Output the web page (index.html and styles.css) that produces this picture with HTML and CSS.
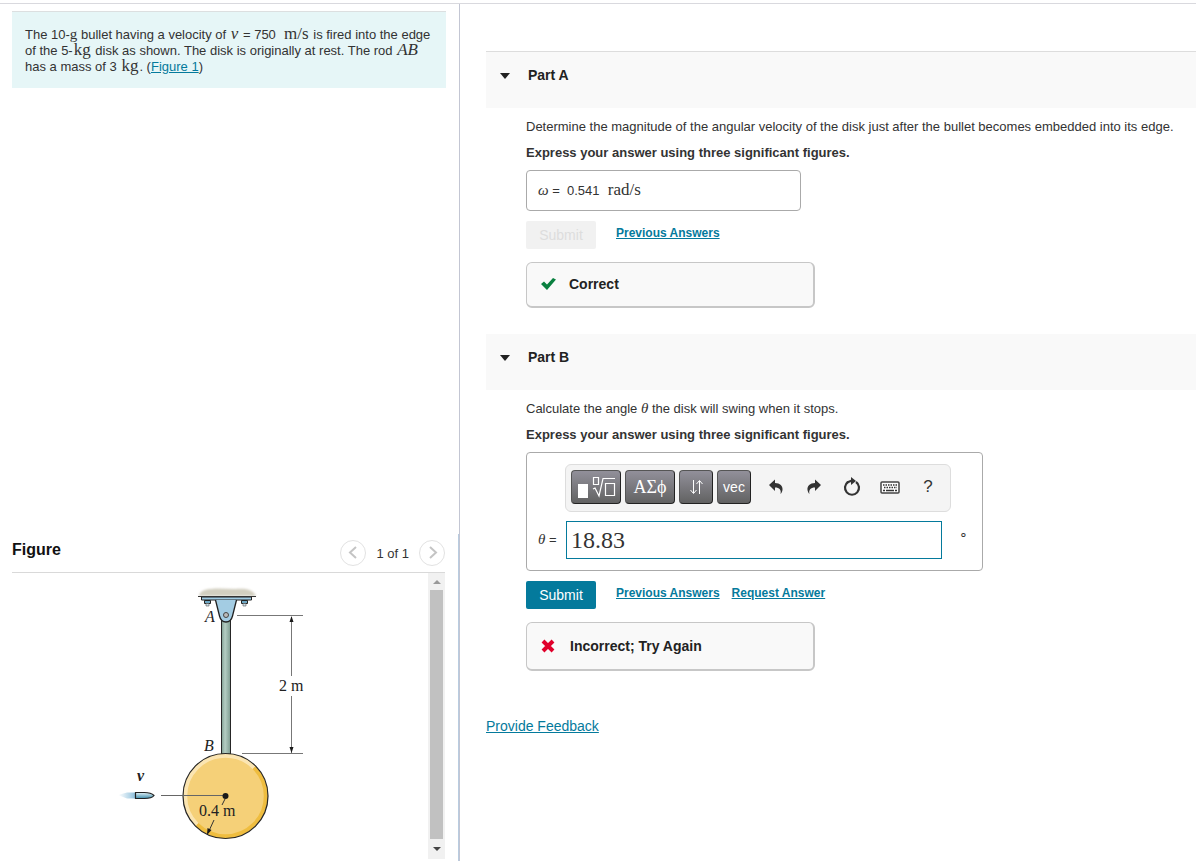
FILE: index.html
```
<!DOCTYPE html>
<html lang="en">

<head>
  <meta name="viewport" content="width=device-width, initial-scale=1.0">
  <meta charset="utf-8">
  <title>Angular velocity of the disk</title>
  <link rel="stylesheet" href="styles.css">
</head>

<body>
  <div class="page">
    <div class="side">
      <div class="problem">
        The 10-<span class="math small">g</span> bullet having a velocity of <i class="math">v</i> = 750 &nbsp;<span class="math">m/s</span> is fired into the edge of the 5-<span class="math">kg</span> disk as shown. The disk is originally at rest. The rod <i class="math">AB</i> has a mass of 3 <span class="math">kg</span>. (<a href="#figure">Figure 1</a>)
      </div>
      <div class="figure" id="figure">
        <div class="figure-head">
          <h2>Figure</h2>
          <div class="pager">
            <button type="button" aria-label="Previous figure"><svg width="24" height="24" viewBox="0 0 24 24"><path d="M15 6l-6 5.500 6 5.500" /></svg></button>
            <span>1 of 1</span>
            <button type="button" aria-label="Next figure"><svg width="24" height="24" viewBox="0 0 24 24"><path d="M10 6l6 5.500-6 5.500" /></svg></button>
          </div>
        </div>
        <div class="figure-view">
          <svg class="drawing" width="416" height="286" viewBox="0 0 416 286">
            <defs>
              <linearGradient id="rod" x1="0" x2="1" y1="0" y2="0">
                <stop offset="0" stop-color="#7f9e92" />
                <stop offset=".4" stop-color="#b4cdc3" />
                <stop offset="1" stop-color="#7d9c90" />
              </linearGradient>
              <linearGradient id="bullet" x1="0" x2="0" y1="0" y2="1">
                <stop offset="0" stop-color="#e4f3f8" />
                <stop offset="1" stop-color="#3e8cab" />
              </linearGradient>
              <linearGradient id="trail" x1="0" x2="1" y1="0" y2="0">
                <stop offset="0" stop-color="#9cc8e0" stop-opacity="0" />
                <stop offset="1" stop-color="#8fc0dc" />
              </linearGradient>
              <filter id="soft" x="-10%" y="-30%" width="120%" height="160%">
                <feGaussianBlur stdDeviation="1" />
              </filter>
            </defs>
            <!-- ceiling and bracket -->
            <path d="M187 23c1-5 6-7 12-7 8-1 16 0 24 0 9-1 18 0 21 7z" fill="#d2cfc0" filter="url(#soft)" />
            <path d="M192.500 27.500h6v3h-6zM229.500 27.500h6v3h-6z" fill="#6fa8c4" stroke="#222" />
            <path d="M194 30.500h3v2.500h-3zM231 30.500h3v2.500h-3z" fill="#cfe3ee" stroke="#555" stroke-width=".6" />
            <path d="M189.500 24h50v3h-50z" fill="#9fcbe3" stroke="#222" />
            <path d="M186 23.500h58" stroke="#333" />
            <rect x="209.500" y="46" width="9" height="135" fill="url(#rod)" stroke="#262626" />
            <path d="M203.500 27h21l-4 16c-1 4-3.500 6-6.500 6s-5.500-2-6.500-6z" fill="#a3cce3" />
            <path d="M203.500 27l4 16c1 4 3.500 6 6.500 6s5.500-2 6.500-6l4-16" fill="none" stroke="#222" stroke-width="1.300" />
            <circle cx="214" cy="42" r="2.500" fill="#bbb" stroke="#444" />
            <!-- disk -->
            <circle cx="213.500" cy="223" r="42.500" fill="#f5d078" />
            <path d="M185 251.500A40.300 40.300 0 0 0 242 194.500" fill="none" stroke="#efbd3f" stroke-width="4" />
            <path d="M185 251.500A40.300 40.300 0 0 1 242 194.500" fill="none" stroke="#fbe5b2" stroke-width="4" />
            <circle cx="213.500" cy="223" r="42.500" fill="none" stroke="#262626" stroke-width="1.200" />
            <path d="M149 222.500h64" stroke="#666" />
            <circle cx="213.500" cy="223" r="3" fill="#1a1a1a" />
            <path d="M213 226l-3 6M202 247l-6 13" stroke="#333" fill="none" />
            <path d="M195 262l.5-7 4 2z" fill="#1a1a1a" />
            <!-- dimension lines -->
            <path d="M225 42.500h66M230 180.500h61M279.500 44v59M279.500 123v57" stroke="#777" />
            <path d="M279.500 43l2 6h-4zM279.500 180l2-6h-4z" fill="#1a1a1a" />
            <!-- bullet -->
            <path d="M106 222l9-2.500h8v6h-8z" fill="url(#trail)" />
            <path d="M123.500 219.500h9c5 0 8 1.500 9.500 3-1.500 2-5 3-9.500 3h-9z" fill="url(#bullet)" stroke="#222" stroke-width="1.200" />
            <g class="labels">
              <text x="193" y="49" font-style="italic">A</text>
              <text x="192" y="178" font-style="italic">B</text>
              <text x="125" y="208" font-style="italic" font-weight="bold">v</text>
              <text x="267" y="118">2 m</text>
              <text x="187" y="243">0.4 m</text>
            </g>
          </svg>
          <div class="scroll">
            <button type="button" class="up" aria-label="Scroll up"></button>
            <div class="thumb"></div>
            <button type="button" class="down" aria-label="Scroll down"></button>
          </div>
        </div>
      </div>
    </div>

    <div class="main">
      <div class="part first">
        <h3>Part A</h3>
        <div class="part-body">
          <p>Determine the magnitude of the angular velocity of the disk just after the bullet becomes embedded into its edge.</p>
          <p class="hint">Express your answer using three significant figures.</p>
          <div class="answer"><i class="math small">ω</i> = &nbsp;0.541 &nbsp;<span class="math">rad/s</span></div>
          <div class="actions">
            <button type="button" class="submit" disabled>Submit</button>
            <a href="#">Previous Answers</a>
          </div>
          <div class="feedback">
            <svg width="15" height="14" viewBox="0 0 15 14"><path d="M0 7l3-2.500 3 3L12 1l3 1.500L6 13z" fill="#0a8040" /></svg>
            Correct
          </div>
        </div>
      </div>

      <div class="part">
        <h3>Part B</h3>
        <div class="part-body">
          <p>Calculate the angle <i class="math small">θ</i> the disk will swing when it stops.</p>
          <p class="hint">Express your answer using three significant figures.</p>
          <div class="editor">
            <div class="toolbar">
              <button type="button" class="key wide" aria-label="Templates">
                <svg width="40" height="24" viewBox="0 0 40 24">
                  <path d="M2 9h10v14H2z" fill="#fff" />
                  <path d="M17.500 2.500h5v7h-5zM17 14l2-1 4 8 4-17.500h12M29.500 8.500h9v12h-9z" fill="none" stroke="#fff" stroke-width="1.200" />
                </svg>
              </button>
              <button type="button" class="key wide greek">ΑΣϕ</button>
              <button type="button" class="key" aria-label="Subscripts and arrows">
                <svg width="14" height="18" viewBox="0 0 14 18"><path d="M4.500 2v13M1.500 12l3 3.500 3-3.500M10.500 16V3M7.500 6l3-3.500 3 3.500" fill="none" stroke="#fff" /></svg>
              </button>
              <button type="button" class="key">vec</button>
              <div class="tools">
                <button type="button" aria-label="Undo">
                  <svg width="14" height="16" viewBox="0 0 14 16"><path d="M0 6l6-5.500v3.500c5 0 8 3 7.500 7-.2 1.500-1 3-2 4 1-4-1-6.500-5.500-6.500V12z" /></svg>
                </button>
                <button type="button" aria-label="Redo">
                  <svg width="14" height="16" viewBox="0 0 14 16"><path d="M14 6L8 .5V4C3 4 0 7 .5 11c.2 1.500 1 3 2 4-1-4 1-6.500 5.500-6.500V12z" /></svg>
                </button>
                <button type="button" aria-label="Reset">
                  <svg width="18" height="20" viewBox="0 0 18 20"><path d="M13 5a7 7 0 1 1-8 0" fill="none" stroke="#333" stroke-width="2.200" /><path d="M8 0l5 4-5 4z" /><path d="M4 5.500l5-2" stroke="#333" stroke-width="2" /></svg>
                </button>
                <button type="button" aria-label="Keyboard shortcuts">
                  <svg width="20" height="14" viewBox="0 0 20 14">
                    <rect x="1" y="2" width="18" height="11" rx="1" fill="#fff" stroke="#444" stroke-width="1.500" />
                    <path d="M3 5h14M4 7.500h13" stroke="#333" stroke-width="1.500" stroke-dasharray="1.500 1" />
                    <path d="M3 10.500h2M6 10.500h8M15 10.500h2" stroke="#333" stroke-width="1.500" />
                  </svg>
                </button>
                <button type="button" aria-label="Help">?</button>
              </div>
            </div>
            <div class="entry">
              <label for="theta"><i class="math small">θ</i> =</label>
              <input type="text" id="theta" value="18.83">
              <span class="unit">∘</span>
            </div>
          </div>
          <div class="actions">
            <button type="button" class="submit">Submit</button>
            <a href="#">Previous Answers</a>
            <a href="#">Request Answer</a>
          </div>
          <div class="feedback wrong">
            <svg width="14" height="14" viewBox="0 0 14 14"><path d="M2 2l10 10M12 2L2 12" stroke="#e0002b" stroke-width="4" /></svg>
            Incorrect; Try Again
          </div>
        </div>
      </div>

      <a class="provide" href="#">Provide Feedback</a>
    </div>
  </div>
</body>

</html>
```
FILE: styles.css
```
* {
  box-sizing: border-box;
}

body, h2, h3, p {
  margin: 0;
}

body {
  padding-top: 3px;
  background: #fff;
  color: #333;
  font: 13px/16px "Liberation Sans", Arial, sans-serif;
}

a {
  color: #047a9c;
}

button {
  padding: 0;
  border: 0;
  font-family: inherit;
  cursor: pointer;
}

.math {
  margin: 0 1px;
  font-family: "Liberation Serif", "Times New Roman", serif;
  font-size: 17px;
  line-height: 12px;
}

.small {
  margin: 0;
  font-size: 15px;
}

.page {
  display: grid;
  grid-template-columns: 5fr 8fr;
  min-height: calc(100vh - 3px);
  border-top: 1px solid #d9d9de;
}

/* left column */

.side {
  display: flex;
  flex-direction: column;
  justify-content: space-between;
  border-right: 1px solid #c3c6d3;
}

.problem {
  margin: 7px 13px 0 12px;
  padding: 15px 12px 13px 13px;
  border-top: 1px solid #dcdfe0;
  background: #e6f6f7;
}

.figure {
  padding: 6px 13px 2px 12px;
  border-right: 1px solid #b9cce0;
}

.figure-head {
  display: flex;
  justify-content: space-between;
  height: 33px;
  border-bottom: 1px solid #d9d9d9;
}

.figure-head h2 {
  padding-top: 1px;
  color: #111;
  font-size: 16px;
  line-height: 18px;
}

.pager {
  display: flex;
  gap: 10px;
  line-height: 28px;
}

.pager button {
  width: 26px;
  height: 26px;
  border: 1px solid #e2e2e2;
  border-radius: 50%;
  background: #fff;
}

.pager svg {
  display: block;
  fill: none;
  stroke: #c4c4c4;
  stroke-width: 2;
}

.figure-view {
  display: flex;
  justify-content: space-between;
}

.drawing {
  flex: 0 1 auto;
  min-width: 0;
}

.labels {
  fill: #222;
  font-family: "Liberation Serif", "Times New Roman", serif;
  font-size: 16px;
}

.scroll {
  display: flex;
  flex: 0 0 17px;
  flex-direction: column;
  align-items: center;
  background: #f1f1f1;
}

.scroll button {
  width: 17px;
  height: 17px;
  background: none;
}

.scroll button::before {
  display: block;
  width: 0;
  margin: 0 auto;
  border: 4px solid transparent;
  content: "";
}

.scroll .up::before {
  border-top: 0;
  border-bottom-color: #999;
}

.scroll .down {
  height: 20px;
}

.scroll .down::before {
  border-bottom: 0;
  border-top-color: #444;
}

.thumb {
  flex: 1;
  width: 13px;
  background: #c1c1c1;
}

/* right column */

.main {
  padding: 47px 0 30px 26px;
}

.part {
  margin-bottom: 26px;
}

.part h3 {
  display: flex;
  align-items: center;
  gap: 18px;
  padding: 15px 14px 24px;
  background: #f9f9f9;
  color: #222;
  font-size: 14px;
  line-height: 17px;
}

.first h3 {
  border-top: 1px solid #ddd;
}

.part h3::before {
  border: 5px solid transparent;
  border-top: 6px solid #222;
  border-bottom: 0;
  content: "";
}

.part-body {
  padding: 11px 0 0 40px;
}

.part-body p {
  margin-bottom: 10px;
}

.part-body .hint {
  margin-bottom: 9px;
  font-weight: bold;
}

.answer {
  width: 275px;
  padding: 12px 11px 11px;
  border: 1px solid #aaa;
  border-radius: 4px;
}

.actions {
  display: flex;
  gap: 12px;
  margin: 10px 0 13px;
  font-size: 12px;
  font-weight: bold;
  line-height: 25px;
}

.submit {
  width: 70px;
  height: 28px;
  margin-right: 8px;
  border-radius: 2px;
  background: #047a9c;
  color: #fff;
  font-size: 14px;
}

.submit:disabled {
  background: #f1f1f1;
  color: #ddd;
}

.feedback {
  display: flex;
  align-items: center;
  gap: 13px;
  width: 289px;
  height: 46px;
  padding: 0 14px 1px;
  border: 1px solid #c7c7c7;
  border-right-width: 2px;
  border-bottom-width: 2px;
  border-radius: 6px;
  background: #f9f9f9;
  color: #222;
  font-size: 14px;
  font-weight: bold;
}

.wrong {
  gap: 15px;
  height: 49px;
  padding-bottom: 0;
}

.editor {
  width: 457px;
  padding: 11px 0;
  border: 1px solid #aaa;
  border-radius: 4px;
}

.toolbar {
  display: flex;
  gap: 4px;
  width: 386px;
  margin-left: 38px;
  padding: 5px 3px 7px 5px;
  border: 1px solid #ddd;
  border-radius: 6px;
  background: #f4f4f4;
}

.key {
  display: flex;
  align-items: center;
  justify-content: center;
  width: 34px;
  height: 34px;
  border: 1px solid #555;
  border-right-color: #222;
  border-bottom-color: #222;
  border-radius: 4px;
  background: linear-gradient(#92909a, #626262);
  color: #fff;
  font-size: 14px;
}

.wide {
  width: 50px;
}

.greek {
  font-family: "Liberation Serif", "Times New Roman", serif;
  font-size: 18px;
}

.tools {
  display: flex;
  margin-left: 2px;
}

.tools button {
  display: flex;
  align-items: center;
  justify-content: center;
  width: 38px;
  background: none;
  color: #333;
  font-size: 17px;
}

.tools svg {
  fill: #333;
}

.entry {
  display: flex;
  align-items: center;
  margin-top: 9px;
}

.entry label {
  width: 39px;
  padding-left: 11px;
}

.entry input {
  width: 376px;
  height: 38px;
  padding: 0 4px;
  border: 1px solid #047a9c;
  background: #fff;
  color: #333;
  font: 24px "Liberation Serif", "Times New Roman", serif;
}

.unit {
  padding-bottom: 12px;
  margin-left: 17px;
  font-size: 14px;
}

.provide {
  display: inline-block;
  margin-top: 21px;
  font-size: 14px;
}
```
